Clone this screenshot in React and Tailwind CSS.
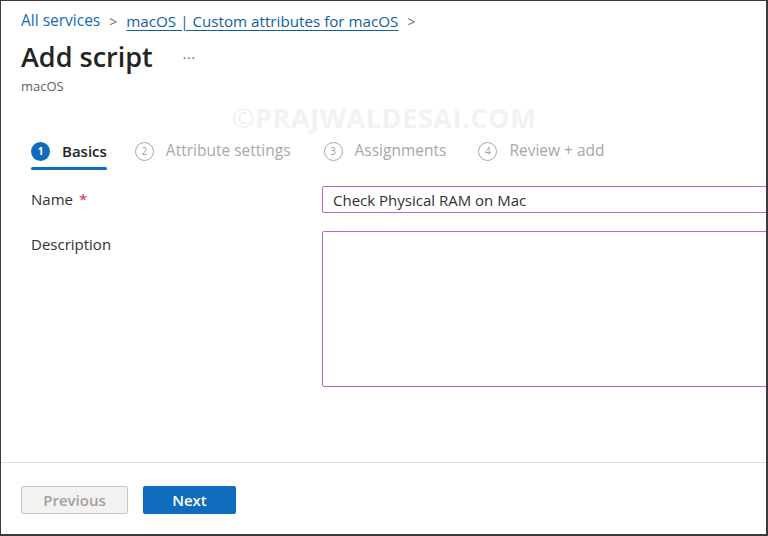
import { useState } from 'react'

const font = { fontFamily: '"Open Sans", "Noto Sans", sans-serif' }

function Step({ n, label, active }) {
  return (
    <div className="relative flex items-center h-[40px] shrink-0">
      <span
        className={
          active
            ? 'w-[19px] h-[19px] rounded-full bg-[#0f6cbd] text-white text-[10px] font-bold flex items-center justify-center'
            : 'w-[19px] h-[19px] rounded-full border border-[#a8a8a8] text-[#a0a0a0] text-[10px] flex items-center justify-center'
        }
      >
        {n}
      </span>
      <span
        className={
          active
            ? 'ml-[12px] text-[15px] font-semibold text-[#242424]'
            : 'ml-[12px] text-[15.5px] text-[#a8a8a8]'
        }
      >
        {label}
      </span>
      {active && <div className="absolute left-0 right-0 bottom-[1px] h-[3px] bg-[#0f6cbd] rounded-sm" />}
    </div>
  )
}

function App() {
  const [name, setName] = useState('Check Physical RAM on Mac')
  const [desc, setDesc] = useState('')

  return (
    <div
      className="w-[768px] h-[536px] bg-white border-l border-t border-b-2 border-r-2 border-[#3a3a3a] overflow-hidden flex flex-col"
      style={font}
    >
      <div className="flex-1 pl-[20px] overflow-hidden">
        <div className="flex items-center h-[20px] mt-[10px] text-[15.5px]">
          <a className="text-[#0f6cbd]">All services</a>
          <span className="mx-[9px] text-[#707070] text-[14px]">&gt;</span>
          <a className="text-[#115ea3] text-[15.2px] underline underline-offset-[3px]">macOS | Custom attributes for macOS</a>
          <span className="mx-[9px] text-[#707070] text-[14px]">&gt;</span>
        </div>

        <div className="flex items-center mt-[8px] h-[34px]">
          <h1 className="text-[27px] font-semibold text-[#242424] leading-none">Add script</h1>
          <span className="ml-[30px] text-[#555] text-[13px] tracking-[1px] mt-[6px]">···</span>
        </div>
        <div className="text-[13px] text-[#616161] mt-[5px] leading-[16px]">macOS</div>

        <div className="flex justify-start pl-[211px] mt-[10px] h-[24px]">
          <span className="text-[27px] font-bold text-[#f2f2f2] leading-none tracking-[0.6px]">©PRAJWALDESAI.COM</span>
        </div>

        <div className="flex items-center pl-[10px] mt-[3px]">
          <Step n="1" label="Basics" active />
          <div className="ml-[28px]">
            <Step n="2" label="Attribute settings" />
          </div>
          <div className="ml-[33px]">
            <Step n="3" label="Assignments" />
          </div>
          <div className="ml-[32px]">
            <Step n="4" label="Review + add" />
          </div>
        </div>

        <div className="flex mt-[15px] pl-[10px]">
          <div className="w-[291px] shrink-0 flex flex-col">
            <div className="h-[27px] flex items-center text-[15px] text-[#323130]">
              Name <span className="ml-[6px] text-[#c4314b]">*</span>
            </div>
            <div className="mt-[18px] h-[27px] flex items-center text-[15px] text-[#323130]">Description</div>
          </div>
          <div className="flex flex-col shrink-0">
            <input
              value={name}
              onChange={e => setName(e.target.value)}
              className="w-[520px] h-[27px] border border-[#b865d6] rounded-[2px] px-[10px] text-[15px] text-[#323130] outline-none"
            />
            <textarea
              value={desc}
              onChange={e => setDesc(e.target.value)}
              className="mt-[18px] w-[520px] h-[156px] border border-[#b865d6] rounded-[2px] px-[10px] py-[4px] resize-none outline-none"
            />
          </div>
        </div>
      </div>

      <div className="h-[72px] border-t border-[#e1e1e1] flex items-center pl-[20px] gap-[15px] pt-[3px]">
        <button className="w-[107px] h-[28px] bg-[#f3f2f1] border border-[#c8c6c4] rounded-[2px] text-[15px] font-semibold text-[#a19f9d]">
          Previous
        </button>
        <button className="w-[93px] h-[28px] bg-[#0f6cbd] rounded-[2px] text-[15px] font-semibold text-white">
          Next
        </button>
      </div>
    </div>
  )
}

export default App
